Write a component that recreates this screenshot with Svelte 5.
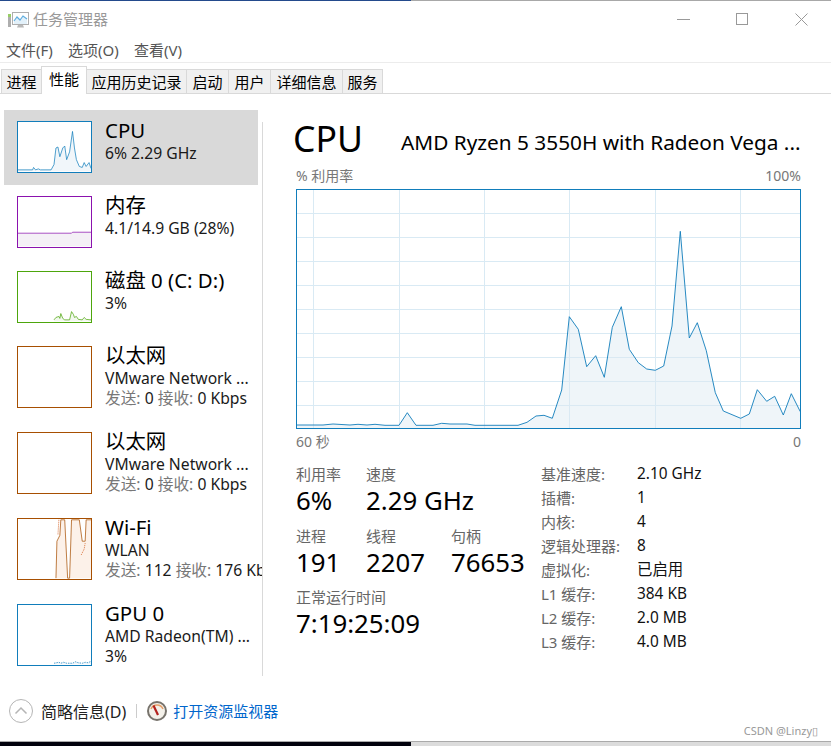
<script lang="ts">
  const tabs = [
    { name: "进程", w: 41 },
    { name: "性能", w: 46 },
    { name: "应用历史记录", w: 101 },
    { name: "启动", w: 43 },
    { name: "用户", w: 43 },
    { name: "详细信息", w: 73 },
    { name: "服务", w: 41 }
  ];

  const toPoints = (pts: number[][]) => pts.map((p) => p.join(",")).join(" ");

  // each thumbnail is 75 wide, the height depends on the row
  const side = [
    {
      title: "CPU", sub: "6%  2.29 GHz", h: 50, color: "#117dbb", fill: "#f1f6fa",
      line: [[0,48.5],[15,48.5],[16,46],[18,48.5],[21,47.5],[23,48.5],[34,48.5],[37,43],[39,26],[41,25],[43,35],[46,26],[48,24],[50,38],[53,30],[56,9],[58,26],[60,38],[63,45],[66,46],[68,41],[70,45],[73,41],[75,47]]
    },
    {
      title: "内存", sub: "4.1/14.9 GB (28%)", h: 50, color: "#8b12ae", fill: "#f4f0f6",
      line: [[0,36.5],[55,36.5],[56,35.5],[75,35.5]]
    },
    {
      title: "磁盘 0 (C: D:)", sub: "3%", h: 50, color: "#4da60c", fill: "#f2f8ee",
      line: [[37,48.5],[39,46],[42,45],[43,47],[44,42],[46,47],[48,48.5],[53,48.5],[55,40],[57,43],[58,46],[60,45],[62,48],[66,48.5],[68,46],[70,48],[75,48.5]]
    },
    { title: "以太网", sub: "VMware Network ...", net: "0|0 Kbps", h: 60, color: "#a74f01", fill: "#fcf3eb", line: [] },
    { title: "以太网", sub: "VMware Network ...", net: "0|0 Kbps", h: 60, color: "#a74f01", fill: "#fcf3eb", line: [] },
    {
      title: "Wi-Fi", sub: "WLAN", net: "112|176 Kbps", h: 60, color: "#a74f01", fill: "#fcf1e9",
      line: [[39,60],[40,22],[43,16],[44,0],[48,0],[51,60],[53,60],[55,0],[63,0],[66,22],[69,22],[70,0],[75,0]],
      dots: [[42,0],[41,16]],
      dots2: [[65,36],[68,30],[69,24]]
    },
    {
      title: "GPU 0", sub: "AMD Radeon(TM) ...", h: 60, color: "#117dbb", fill: "#f1f6fa", extra: "3%", dashed: true,
      line: [[37,59],[42,58],[44,59],[47,58],[50,59],[56,59],[59,57.5],[62,58.5],[66,59],[69,58],[72,58.5],[75,57]]
    }
  ];

  // read off the reference, in pixels inside the 505x240 plot
  const cpu = [
    [0.5,236],[27,236],[37,235],[54,236],[62,235.3],[71,236],[79,235.3],[89,236.3],[103,236.3],[111.3,223.7],[120,236.3],[137,236.3],[145.7,234.3],[154,235],[171,235],[179,236.3],[222,236.3],[231,233.3],[240,227],[248,226.3],[256.3,229.3],[265.7,201],[273.3,127.7],[282.3,140.3],[290.7,177.7],[299.7,166.7],[308.3,188.3],[316.3,138.3],[325.3,117.7],[333.3,160.3],[342.3,173.7],[350.7,180],[359.3,181.3],[367.7,177],[376,137],[384.3,42.3],[393.3,149],[401.3,133.7],[410.3,161.7],[419.3,203.7],[427.3,222],[444.7,229.3],[453.3,225],[461.3,200.7],[470.7,212.3],[478.7,207.3],[487.3,226],[495.3,204.7],[504.3,222.7]
  ];
  const hLines = [24.5, 48.5, 72.5, 96.5, 120.5, 144.5, 168.5, 192.5, 216.5];
  const vLines = [17.5, 103.5, 188.5, 273.5, 359.5, 444.5];

  const area = (pts: number[][], h: number) =>
    pts.length ? toPoints([[pts[0][0], h], ...pts, [pts[pts.length - 1][0], h]]) : "";

  const quick = [
    [
      { label: "利用率", value: "6%", w: 70 },
      { label: "速度", value: "2.29 GHz", w: 155 }
    ],
    [
      { label: "进程", value: "191", w: 70 },
      { label: "线程", value: "2207", w: 85 },
      { label: "句柄", value: "76653", w: 80 }
    ]
  ];

  const specs = [
    ["基准速度:", "2.10 GHz"],
    ["插槽:", "1"],
    ["内核:", "4"],
    ["逻辑处理器:", "8"],
    ["虚拟化:", "已启用"],
    ["L1 缓存:", "384 KB"],
    ["L2 缓存:", "2.0 MB"],
    ["L3 缓存:", "4.0 MB"]
  ];
</script>

<div class="window">
  <div class="edge-top"></div>

  <header class="titlebar">
    <svg class="app-icon" width="22" height="18" viewBox="0 0 22 18">
      <rect x="0" y="5" width="3" height="11" fill="#9a9a9a" />
      <rect x="0" y="3" width="3" height="3" fill="#7fc241" />
      <rect x="4.5" y="1.5" width="16" height="12" fill="#fff" stroke="#9b9b9b" />
      <path d="M6 10 9 6l3 3 3-4 4 3v5H6z" fill="#cfe7f7" opacity=".7" />
      <polyline points="6,10 9,6 12,9 15,5 19,8" fill="none" stroke="#3a9bd8" stroke-width="1.2" />
      <path d="M10 14h5l1 2.5H9z" fill="#a8a8a8" />
    </svg>
    <span class="app-title">任务管理器</span>
    <div class="controls">
      <svg width="13" height="13" viewBox="0 0 13 13"><path d="M0 6.5h13" stroke="#999" /></svg>
      <svg width="13" height="13" viewBox="0 0 13 13"><rect x=".5" y=".5" width="11" height="11" fill="none" stroke="#999" /></svg>
      <svg width="13" height="13" viewBox="0 0 13 13"><path d="M.5.5l12 12M12.5.5l-12 12" stroke="#999" /></svg>
    </div>
  </header>

  <nav class="menu">
    <span class="m1">文件(F)</span>
    <span class="m2">选项(O)</span>
    <span>查看(V)</span>
  </nav>

  <div class="tabs">
    {#each tabs as tab, i}
      <div class="tab" class:active={i === 1} style="width: {tab.w}px">{tab.name}</div>
    {/each}
  </div>

  <main class="body">
    <aside class="sidebar">
      {#each side as item, i}
        <div class="item" class:selected={i === 0} class:tall={item.h === 60}>
          <svg class="thumb" width="75" height={item.h} viewBox="0 0 75 {item.h}" style="border-color: {item.color}">
            {#if item.line.length}
              <polygon points={area(item.line, item.h)} fill={item.fill} />
              <polyline points={toPoints(item.line)} fill="none" stroke={item.color} stroke-width="1" opacity=".75" stroke-dasharray={item.dashed ? "1.5 1" : "none"} />
            {/if}
            {#if item.dots}
              <polyline points={toPoints(item.dots)} fill="none" stroke="#d9703a" stroke-dasharray="1 1" />
              <polyline points={toPoints(item.dots2)} fill="none" stroke="#d9703a" stroke-dasharray="1 1" />
            {/if}
          </svg>
          <div class="item-text">
            <div class="item-title">{item.title}</div>
            <div class="item-sub">{item.sub}</div>
            {#if item.net}
              <div class="item-sub"><span class="dim">发送:</span> {item.net.split("|")[0]} <span class="dim">接收:</span> {item.net.split("|")[1]}</div>
            {/if}
            {#if item.extra}
              <div class="item-sub">{item.extra}</div>
            {/if}
          </div>
        </div>
      {/each}
    </aside>

    <section class="detail">
      <div class="head">
        <h1>CPU</h1>
        <div class="model">AMD Ryzen 5 3550H with Radeon Vega ...</div>
      </div>

      <div class="axis top"><span>% 利用率</span><span>100%</span></div>
      <svg class="plot" width="505" height="240" viewBox="0 0 505 240">
        {#each hLines as y}
          <line x1="0" x2="505" y1={y} y2={y} stroke="#d9eaf4" />
        {/each}
        {#each vLines as x}
          <line y1="0" y2="240" x1={x} x2={x} stroke="#d9eaf4" />
        {/each}
        <polygon points={area(cpu, 239)} fill="#dbe8f2" opacity=".45" />
        <polyline points={toPoints(cpu)} fill="none" stroke="#117dbb" stroke-width="1" opacity=".9" />
        <rect x=".5" y=".5" width="504" height="239" fill="none" stroke="#117dbb" />
      </svg>
      <div class="axis bottom"><span>60 秒</span><span>0</span></div>

      <div class="stats">
        <div class="left-stats">
          {#each quick as row}
            <div class="stat-row">
              {#each row as s}
                <div class="stat" style="width: {s.w}px">
                  <div class="stat-label">{s.label}</div>
                  <div class="stat-value">{s.value}</div>
                </div>
              {/each}
            </div>
          {/each}
          <div class="stat">
            <div class="stat-label">正常运行时间</div>
            <div class="stat-value">7:19:25:09</div>
          </div>
        </div>

        <div class="specs">
          {#each specs as [k, v]}
            <div class="spec-key">{k}</div>
            <div class="spec-val">{v}</div>
          {/each}
        </div>
      </div>
    </section>
  </main>

  <footer class="footer">
    <svg width="24" height="24" viewBox="0 0 24 24">
      <circle cx="12" cy="12" r="11.5" fill="#fff" stroke="#b5b5b5" />
      <path d="M6.5 14.5 12 9l5.5 5.5" fill="none" stroke="#b5b5b5" stroke-width="1.5" />
    </svg>
    <span class="fewer">简略信息(D)</span>
    <span class="divider"></span>
    <svg width="20" height="20" viewBox="0 0 20 20">
      <circle cx="10" cy="10" r="9" fill="#f4f1ea" stroke="#77736c" stroke-width="2" />
      <path d="M4 8a6.5 6.5 0 0 1 12 0" fill="none" stroke="#e5a06b" stroke-width="1.5" />
      <path d="M6.5 4.5 11 14" stroke="#b3211d" stroke-width="2.2" />
    </svg>
    <span class="link">打开资源监视器</span>
    <span class="watermark">CSDN @Linzy▯</span>
  </footer>

  <div class="edge-bottom"></div>
</div>

<style>
  :global(body) {
    margin: 0;
    background: #fff;
  }

  .window {
    width: 831px;
    height: 746px;
    display: flex;
    flex-direction: column;
    overflow: hidden;
    background: #fff;
    color: #000;
    font-family: "Noto Sans", "Noto Sans CJK SC", sans-serif;
  }

  .edge-top {
    height: 1px;
    flex: none;
    background: linear-gradient(to right, #234a8c 411px, #a8a8a8 411px);
  }

  .titlebar {
    height: 37px;
    flex: none;
    display: flex;
    align-items: center;
    padding-left: 8px;
  }

  .app-icon {
    margin-right: 3px;
    opacity: 0.8;
  }

  .app-title {
    font-size: 15px;
    color: #999;
    margin-bottom: 2px;
  }

  .controls {
    margin-left: auto;
    display: flex;
    gap: 46px;
    padding-right: 23px;
    padding-bottom: 1px;
  }

  .menu {
    height: 23px;
    padding-bottom: 1px;
    flex: none;
    display: flex;
    align-items: center;
    padding-left: 6px;
    font-size: 15px;
    color: #555;
    border-bottom: 1px solid #ececec;
  }

  .m1 {
    width: 62px;
  }

  .m2 {
    width: 66px;
  }

  .tabs {
    height: 27px;
    flex: none;
    margin-top: 3px;
    padding-left: 1px;
    display: flex;
    align-items: flex-end;
    border-bottom: 1px solid #d9d9d9;
    font-size: 15px;
  }

  .tab {
    height: 24px;
    line-height: 24px;
    box-sizing: border-box;
    text-align: center;
    background: #f0f0f0;
    border: 1px solid #d9d9d9;
    border-bottom: none;
    margin-left: -1px;
    white-space: nowrap;
  }

  .tab:first-child {
    margin-left: 0;
  }

  .tab.active {
    height: 28px;
    line-height: 25px;
    background: #fff;
    margin-bottom: -1px;
    position: relative;
    z-index: 1;
  }

  .body {
    height: 586px;
    flex: none;
    display: flex;
    padding-top: 16px;
    box-sizing: border-box;
  }

  .sidebar {
    width: 263px;
    flex: none;
    box-sizing: border-box;
    padding-left: 4px;
    position: relative;
    overflow: hidden;
    height: 566px;
  }

  .sidebar::after {
    content: "";
    position: absolute;
    right: 0;
    top: 12px;
    bottom: 0;
    width: 1px;
    background: #d9d9d9;
  }

  .item {
    width: 254px;
    height: 75px;
    display: flex;
    box-sizing: border-box;
    padding: 12px 0 0 13px;
  }

  .item.tall {
    height: 86px;
  }

  .item.selected {
    background: #d9d9d9;
  }

  .thumb {
    flex: none;
    box-sizing: content-box;
    border: 1px solid;
    margin: -1px 0 0 0;
    background: #fff;
    width: 73px;
  }

  .item-text {
    margin-left: 13px;
    margin-top: -5px;
    white-space: nowrap;
  }

  .item-title {
    font-size: 20.4px;
    line-height: 26px;
  }

  .item-sub {
    font-size: 15.7px;
    line-height: 20px;
    color: #1a1a1a;
  }

  .dim {
    color: #777;
  }

  .detail {
    flex: 1;
    min-width: 0;
    padding: 0 28px 0 33px;
  }

  .head {
    display: flex;
    align-items: flex-start;
    height: 53px;
    margin-top: 4px;
  }

  h1 {
    margin: 0 0 0 -3px;
    font-weight: 400;
    font-size: 35.5px;
    line-height: 48px;
    width: 108px;
  }

  .model {
    font-size: 20.8px;
    line-height: 28px;
    margin-top: 14px;
    white-space: nowrap;
  }

  .axis {
    display: flex;
    justify-content: space-between;
    font-size: 14px;
    line-height: 18px;
    color: #777;
    width: 505px;
  }

  .axis.top {
    margin-bottom: 4px;
  }

  .axis.bottom {
    margin-top: 4px;
  }

  .plot {
    display: block;
  }

  .stats {
    display: flex;
    margin-top: 15px;
  }

  .left-stats {
    width: 245px;
    flex: none;
  }

  .stat-row {
    display: flex;
    height: 61.5px;
  }

  .stat-label {
    font-size: 15px;
    line-height: 17px;
    color: #666;
  }

  .stat-value {
    font-size: 25.8px;
    line-height: 34px;
  }

  .specs {
    display: grid;
    grid-template-columns: 96px 1fr;
    grid-auto-rows: 24px;
    line-height: 24px;
    font-size: 15px;
    margin-top: -4px;
  }

  .spec-key {
    color: #666;
  }

  .spec-val {
    color: #111;
    font-size: 15.4px;
  }

  .footer {
    flex: 1;
    display: flex;
    align-items: center;
    padding-left: 9px;
    position: relative;
  }

  .fewer {
    font-size: 16px;
    margin-left: 8px;
    color: #222;
  }

  .divider {
    width: 1px;
    height: 14px;
    background: #ccc;
    margin: 0 10px;
  }

  .link {
    font-size: 15px;
    color: #0066cc;
    margin-left: 6px;
  }

  .watermark {
    position: absolute;
    right: 13px;
    bottom: 3px;
    font-size: 11px;
    color: #999;
  }

  .edge-bottom {
    height: 5px;
    flex: none;
    background: linear-gradient(to right, #02020c 411px, #dcdcdc 411px);
    border-top: 1px solid #aaa;
    box-sizing: border-box;
  }
</style>
